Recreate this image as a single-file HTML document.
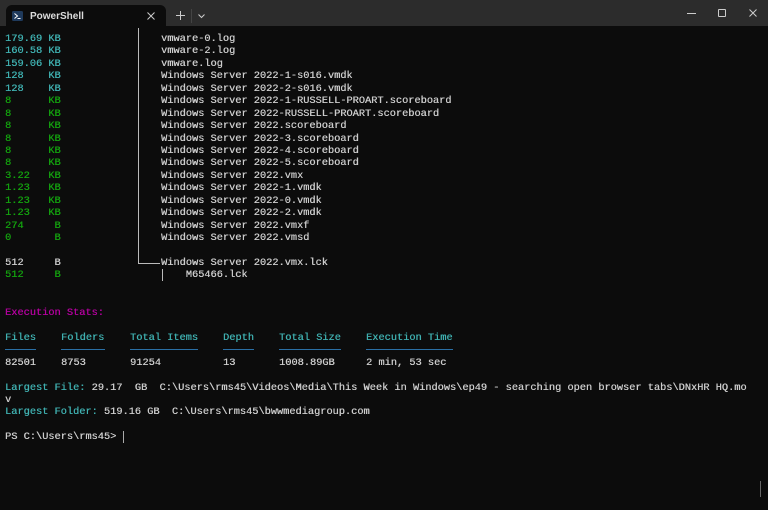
<!DOCTYPE html>
<html><head><meta charset="utf-8"><style>
html,body{margin:0;padding:0;width:768px;height:510px;overflow:hidden;background:#0c0c0c}
.bar{position:absolute;left:0;top:0;width:768px;height:26px;background:#2c2c2c}
.tab{position:absolute;left:6px;top:5px;width:160px;height:22px;background:#0c0c0c;border-radius:6px 6px 0 0}
.tt{position:absolute;left:30px;top:11px;font:bold 10px "Liberation Sans",sans-serif;color:#dddddd}
.t{position:absolute;font-family:"Liberation Mono",monospace;font-size:10.3px;line-height:12.44px;white-space:pre;color:#cccccc;text-shadow:0.3px 0 0 currentColor}
.c{color:#3fb0b0}.g{color:#13a10e}.m{color:#b4009e}.w{color:#cccccc}
.ul{position:absolute;height:1px;background:#2a6fa5;top:349px}
</style></head><body>
<div class="bar"></div>
<div class="tab"></div>
<svg style="position:absolute;left:12px;top:11px" width="11" height="10"><rect x="0" y="0" width="11" height="10" rx="1.5" fill="#1f3a5c"/><path d="M2.5 2.5 L5.5 5 L2.5 7.5" stroke="#fff" fill="none" stroke-width="1"/><path d="M5.5 7.5h3" stroke="#fff"/></svg>
<div class="tt">PowerShell</div>
<svg style="position:absolute;left:147px;top:12px" width="8" height="8"><path d="M0.5 0.5L7.5 7.5M7.5 0.5L0.5 7.5" stroke="#ccc" stroke-width="1"/></svg>
<svg style="position:absolute;left:176px;top:11px" width="9" height="9"><path d="M4.5 0V9M0 4.5H9" stroke="#ccc" stroke-width="1"/></svg>
<div style="position:absolute;left:191px;top:9px;width:1px;height:14px;background:#444"></div>
<svg style="position:absolute;left:198px;top:14px" width="7" height="5"><path d="M0.5 0.5L3.5 3.5L6.5 0.5" stroke="#ccc" fill="none"/></svg>
<div style="position:absolute;left:687px;top:13px;width:9px;height:1px;background:#ccc"></div>
<div style="position:absolute;left:718px;top:9px;width:6px;height:6px;border:1px solid #ccc;border-radius:1px"></div>
<svg style="position:absolute;left:749px;top:9px" width="8" height="8"><path d="M0.5 0.5L7.5 7.5M7.5 0.5L0.5 7.5" stroke="#ccc" stroke-width="1"/></svg>

<div class="t c" style="left:5px;top:33px">179.69 KB
160.58 KB
159.06 KB
128    KB
128    KB</div>
<div class="t g" style="left:5px;top:95.2px">8      KB
8      KB
8      KB
8      KB
8      KB
8      KB
3.22   KB
1.23   KB
1.23   KB
1.23   KB
274     B
0       B</div>
<div class="t w" style="left:5px;top:257px">512     B</div>
<div class="t g" style="left:5px;top:269.4px">512     B</div>
<div class="t" style="left:161px;top:33px">vmware-0.log
vmware-2.log
vmware.log
Windows Server 2022-1-s016.vmdk
Windows Server 2022-2-s016.vmdk
Windows Server 2022-1-RUSSELL-PROART.scoreboard
Windows Server 2022-RUSSELL-PROART.scoreboard
Windows Server 2022.scoreboard
Windows Server 2022-3.scoreboard
Windows Server 2022-4.scoreboard
Windows Server 2022-5.scoreboard
Windows Server 2022.vmx
Windows Server 2022-1.vmdk
Windows Server 2022-0.vmdk
Windows Server 2022-2.vmdk
Windows Server 2022.vmxf
Windows Server 2022.vmsd

Windows Server 2022.vmx.lck
    M65466.lck</div>
<div style="position:absolute;left:138px;top:28px;width:1px;height:235px;background:#bbb"></div>
<div style="position:absolute;left:138px;top:263px;width:22px;height:1px;background:#bbb"></div>
<div style="position:absolute;left:162px;top:269px;width:1px;height:12px;background:#bbb"></div>

<div class="t m" style="left:5px;top:307px">Execution Stats:</div>
<div class="t c" style="left:5px;top:332px">Files</div>
<div class="t c" style="left:61px;top:332px">Folders</div>
<div class="t c" style="left:130px;top:332px">Total Items</div>
<div class="t c" style="left:223px;top:332px">Depth</div>
<div class="t c" style="left:279px;top:332px">Total Size</div>
<div class="t c" style="left:366px;top:332px">Execution Time</div>
<div class="ul" style="left:5px;width:31px"></div>
<div class="ul" style="left:61px;width:44px"></div>
<div class="ul" style="left:130px;width:68px"></div>
<div class="ul" style="left:223px;width:31px"></div>
<div class="ul" style="left:279px;width:62px"></div>
<div class="ul" style="left:366px;width:87px"></div>
<div class="t" style="left:5px;top:357px">82501</div>
<div class="t" style="left:61px;top:357px">8753</div>
<div class="t" style="left:130px;top:357px">91254</div>
<div class="t" style="left:223px;top:357px">13</div>
<div class="t" style="left:279px;top:357px">1008.89GB</div>
<div class="t" style="left:366px;top:357px">2 min, 53 sec</div>
<div class="t" style="left:5px;top:381.5px"><span class="c">Largest File:</span> 29.17  GB  C:\Users\rms45\Videos\Media\This Week in Windows\ep49 - searching open browser tabs\DNxHR HQ.mo
v
<span class="c">Largest Folder:</span> 519.16 GB  C:\Users\rms45\bwwmediagroup.com

PS C:\Users\rms45&gt; </div>
<div style="position:absolute;left:123px;top:431px;width:1px;height:12px;background:#aaa"></div>
<div style="position:absolute;left:760px;top:481px;width:1px;height:16px;background:#666"></div>
</body></html>
